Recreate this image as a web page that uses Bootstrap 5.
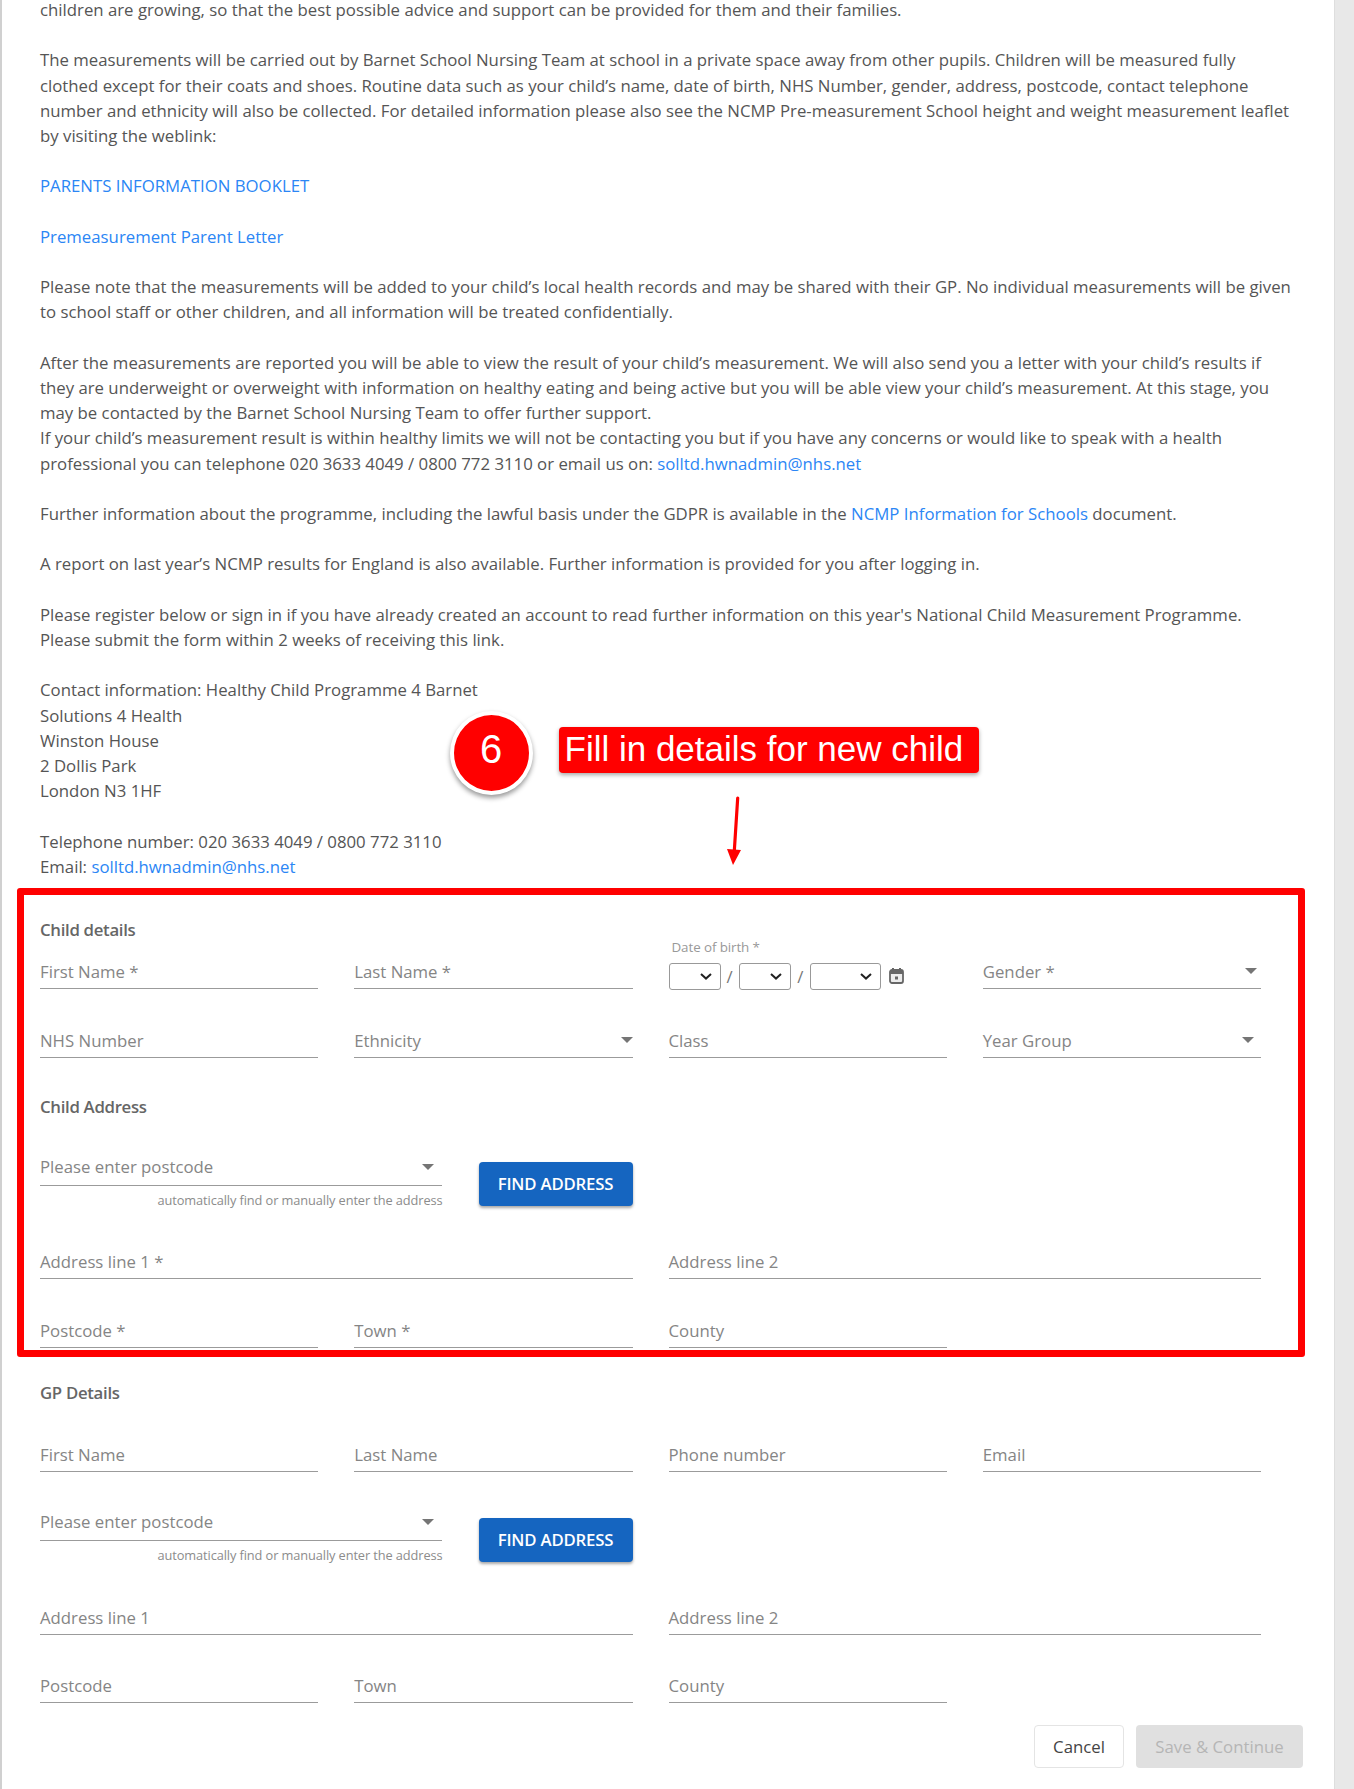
<!DOCTYPE html>
<html lang="en">
<head>
<meta charset="utf-8">
<title>Child details</title>
<link href="https://cdn.jsdelivr.net/npm/bootstrap@5.3.0/dist/css/bootstrap.min.css" rel="stylesheet">
<style>
html,body{height:1789px;overflow:hidden;background:#fff}
body{font-family:"Open Sans","Noto Sans",sans-serif;font-size:16.78px;color:#555}
.pagewrap{height:1789px;position:relative}
.mainpane{border-left:2px solid #d0d0d0;padding:0 31px 0 38px;height:1789px;overflow:hidden}
.sidebar{width:20px;background:#e8e8e8;border-left:1px solid #dedede}
.intro{line-height:25.2px;width:1254px}
.intro p{margin-bottom:25.2px}
.intro p.firstline{line-height:19.2px;margin-bottom:28.2px}
.intro p.tight{margin-bottom:0}
.intro a{color:#2b86f5;text-decoration:none}
.frm{width:1221px}
.grid36{--bs-gutter-x:36px}
.sect{font-weight:600;font-size:16.78px;line-height:24px;color:#666;letter-spacing:-.3px}
.fld{height:32px;line-height:29px;border-bottom:1px solid #9b9b9b;color:#858585}
.fldsel{padding-bottom:2px}
.fldpost{height:33px;padding-bottom:4px}
.trng{width:0;height:0;border-left:6px solid transparent;border-right:6px solid transparent;border-top:6px solid #757575}
.tr6{margin-right:0}.tr10{margin-right:4px}.tr13{margin-right:7px}.tr14{margin-right:8px}
.rowgap{margin-top:37px}
.rowgap36{margin-top:36px}
.mt-head1{margin-top:39px}
.mt-f{margin-top:15px}
.mt-ad{margin-top:34px}
.mt-ad2{margin-top:39px}
.mt-ad3{margin-top:40px}
.mt-gp{margin-top:33px}
.mt-gpr{margin-top:35px}
.mt-post2{margin-top:36px}
.hint{font-size:12.8px;line-height:16px;margin-top:6px;margin-right:-1px;color:#8c8c8c;text-align:right;letter-spacing:-.1px}
.btnfind{width:154px;height:44px;margin-top:9px;background:#1565c0;color:#fff;border:0;border-radius:4px;font-weight:600;font-size:16.78px;letter-spacing:-.2px;padding:0;box-shadow:0 2px 3px rgba(0,0,0,.35)}
.btnfind2{margin-top:10px}
.btnfind:hover{background:#1565c0;color:#fff}
.addrgap{gap:37px}
.dob{margin-top:-18px;margin-bottom:-1px}
.doblab{font-size:13.4px;line-height:16px;color:#999;margin-left:3px;margin-bottom:8px;letter-spacing:-.1px}
.dobsel{height:27px;border:1px solid #999;border-radius:3px;color:#333;font-size:13px;padding:0;appearance:none;-webkit-appearance:none;background:#fff url("data:image/svg+xml,%3Csvg xmlns='http://www.w3.org/2000/svg' viewBox='0 0 12 7'%3E%3Cpath d='M1 1l5 4.6L11 1' fill='none' stroke='%23222' stroke-width='2'/%3E%3C/svg%3E") no-repeat right 8px center/12px 7px}
.ds1{width:52px}.ds2{width:52px}.ds3{width:71px}
.slash{width:18px;text-align:center;color:#777;line-height:27px}
.slashw{width:19.6px}
.calico{width:15px;height:16px;margin-left:8px}
.actionrow{margin-top:22px;gap:12px;width:1263px}
.btncancel,.btnsave{height:43px;border-radius:4px;font-size:16.78px;padding:0}
.btncancel{width:90px;background:#fff;border:1px solid #e4e4e4;color:#444}
.btnsave,.btnsave:disabled{width:167px;background:#e0e0e0;border:0;color:#b5b5b5;opacity:1}
.annbox{position:absolute;left:16.5px;top:888px;width:1288px;height:469px;border:7px solid #f00;border-radius:3px;pointer-events:none}
.annnum{position:absolute;left:449.5px;top:711px;width:83px;height:84px;border-radius:50%;background:#f00;border:4px solid #fff;box-shadow:0 3px 5px rgba(0,0,0,.4);color:#fff;font-family:"Liberation Sans",Arial,sans-serif;font-size:40px;line-height:69px;text-align:center}
.annlab{position:absolute;left:559px;top:727px;width:420px;height:46px;background:#f00;border-radius:4px;box-shadow:0 2px 4px rgba(0,0,0,.35);color:#fff;font-family:"Liberation Sans",Arial,sans-serif;font-size:35px;line-height:44px;padding-left:5.5px;white-space:nowrap}
.annarrow{position:absolute;left:720px;top:795px;width:30px;height:72px}
</style>
</head>
<body>
<div class="pagewrap d-flex">
  <div class="mainpane flex-grow-1">
    <div class="intro">
      <p class="firstline">children are growing, so that the best possible advice and support can be provided for them and their families.</p>
      <p>The measurements will be carried out by Barnet School Nursing Team at school in a private space away from other pupils. Children will be measured fully clothed except for their coats and shoes. Routine data such as your child’s name, date of birth, NHS Number, gender, address, postcode, contact telephone number and ethnicity will also be collected. For detailed information please also see the NCMP Pre-measurement School height and weight measurement leaflet by visiting the weblink:</p>
      <p><a href="#">PARENTS INFORMATION BOOKLET</a></p>
      <p><a href="#">Premeasurement Parent Letter</a></p>
      <p>Please note that the measurements will be added to your child’s local health records and may be shared with their GP. No individual measurements will be given to school staff or other children, and all information will be treated confidentially.</p>
      <p class="tight">After the measurements are reported you will be able to view the result of your child’s measurement. We will also send you a letter with your child’s results if they are underweight or overweight with information on healthy eating and being active but you will be able view your child’s measurement. At this stage, you may be contacted by the Barnet School Nursing Team to offer further support.</p>
      <p>If your child’s measurement result is within healthy limits we will not be contacting you but if you have any concerns or would like to speak with a health professional you can telephone 020 3633 4049 / 0800 772 3110 or email us on: <a href="#">solltd.hwnadmin@nhs.net</a></p>
      <p>Further information about the programme, including the lawful basis under the GDPR is available in the <a href="#">NCMP Information for Schools</a> document.</p>
      <p>A report on last year’s NCMP results for England is also available. Further information is provided for you after logging in.</p>
      <p>Please register below or sign in if you have already created an account to read further information on this year's National Child Measurement Programme. Please submit the form within 2 weeks of receiving this link.</p>
      <p>Contact information: Healthy Child Programme 4 Barnet<br>Solutions 4 Health<br>Winston House<br>2 Dollis Park<br>London N3 1HF</p>
      <p class="tight">Telephone number: 020 3633 4049 / 0800 772 3110<br>Email: <a href="#">solltd.hwnadmin@nhs.net</a></p>
    </div>

    <div class="frm">
      <div class="sect mt-head1">Child details</div>
      <div class="row grid36 mt-f">
        <div class="col-3"><div class="fld">First Name *</div></div>
        <div class="col-3"><div class="fld">Last Name *</div></div>
        <div class="col-3">
          <div class="dob">
            <div class="doblab">Date of birth *</div>
            <div class="d-flex align-items-center">
              <select class="dobsel ds1" aria-label="Day"></select><span class="slash">/</span>
              <select class="dobsel ds2" aria-label="Month"></select><span class="slash slashw">/</span>
              <select class="dobsel ds3" aria-label="Year"></select>
              <svg class="calico" viewBox="0 0 15 16" aria-hidden="true"><rect x="1" y="2" width="13" height="13" rx="2" fill="#ececec" stroke="#666" stroke-width="1.8"/><rect x="1" y="2" width="13" height="4" fill="#666"/><rect x="3" y="0" width="2" height="3" fill="#666"/><rect x="10" y="0" width="2" height="3" fill="#666"/><rect x="6" y="8.5" width="3" height="3" fill="#666"/></svg>
            </div>
          </div>
        </div>
        <div class="col-3"><div class="fld fldsel d-flex justify-content-between align-items-center">Gender *<span class="trng tr10"></span></div></div>
      </div>
      <div class="row grid36 rowgap">
        <div class="col-3"><div class="fld">NHS Number</div></div>
        <div class="col-3"><div class="fld fldsel d-flex justify-content-between align-items-center">Ethnicity<span class="trng tr6"></span></div></div>
        <div class="col-3"><div class="fld">Class</div></div>
        <div class="col-3"><div class="fld fldsel d-flex justify-content-between align-items-center">Year Group<span class="trng tr13"></span></div></div>
      </div>

      <div class="sect rowgap">Child Address</div>
      <div class="row grid36 mt-ad">
        <div class="col-6">
          <div class="d-flex addrgap">
            <div class="flex-grow-1">
              <div class="fld fldpost d-flex justify-content-between align-items-center">Please enter postcode<span class="trng tr14"></span></div>
              <div class="hint">automatically find or manually enter the address</div>
            </div>
            <button type="button" class="btn btnfind flex-shrink-0">FIND ADDRESS</button>
          </div>
        </div>
      </div>
      <div class="row grid36 mt-ad2">
        <div class="col-6"><div class="fld">Address line 1 *</div></div>
        <div class="col-6"><div class="fld">Address line 2</div></div>
      </div>
      <div class="row grid36 rowgap">
        <div class="col-3"><div class="fld">Postcode *</div></div>
        <div class="col-3"><div class="fld">Town *</div></div>
        <div class="col-3"><div class="fld">County</div></div>
      </div>

      <div class="sect mt-gp">GP Details</div>
      <div class="row grid36 mt-gpr">
        <div class="col-3"><div class="fld">First Name</div></div>
        <div class="col-3"><div class="fld">Last Name</div></div>
        <div class="col-3"><div class="fld">Phone number</div></div>
        <div class="col-3"><div class="fld">Email</div></div>
      </div>
      <div class="row grid36 mt-post2">
        <div class="col-6">
          <div class="d-flex addrgap">
            <div class="flex-grow-1">
              <div class="fld fldpost d-flex justify-content-between align-items-center">Please enter postcode<span class="trng tr14"></span></div>
              <div class="hint">automatically find or manually enter the address</div>
            </div>
            <button type="button" class="btn btnfind btnfind2 flex-shrink-0">FIND ADDRESS</button>
          </div>
        </div>
      </div>
      <div class="row grid36 mt-ad3">
        <div class="col-6"><div class="fld">Address line 1</div></div>
        <div class="col-6"><div class="fld">Address line 2</div></div>
      </div>
      <div class="row grid36 rowgap36">
        <div class="col-3"><div class="fld">Postcode</div></div>
        <div class="col-3"><div class="fld">Town</div></div>
        <div class="col-3"><div class="fld">County</div></div>
      </div>
    </div>

    <div class="d-flex justify-content-end actionrow">
      <button type="button" class="btn btncancel">Cancel</button>
      <button type="button" class="btn btnsave" disabled>Save &amp; Continue</button>
    </div>
  </div>
  <div class="sidebar flex-shrink-0"></div>

  <div class="annbox"></div>
  <div class="annnum">6</div>
  <div class="annlab">Fill in details for new child</div>
  <svg class="annarrow" viewBox="0 0 30 72" aria-hidden="true"><path d="M17.7 3 14.3 56" stroke="#f00" stroke-width="3.2" stroke-linecap="round" fill="none"/><path d="M7 54 21 55 13 70z" fill="#f00"/></svg>
</div>
<script src="https://cdn.jsdelivr.net/npm/bootstrap@5.3.0/dist/js/bootstrap.bundle.min.js"></script>
</body>
</html>
